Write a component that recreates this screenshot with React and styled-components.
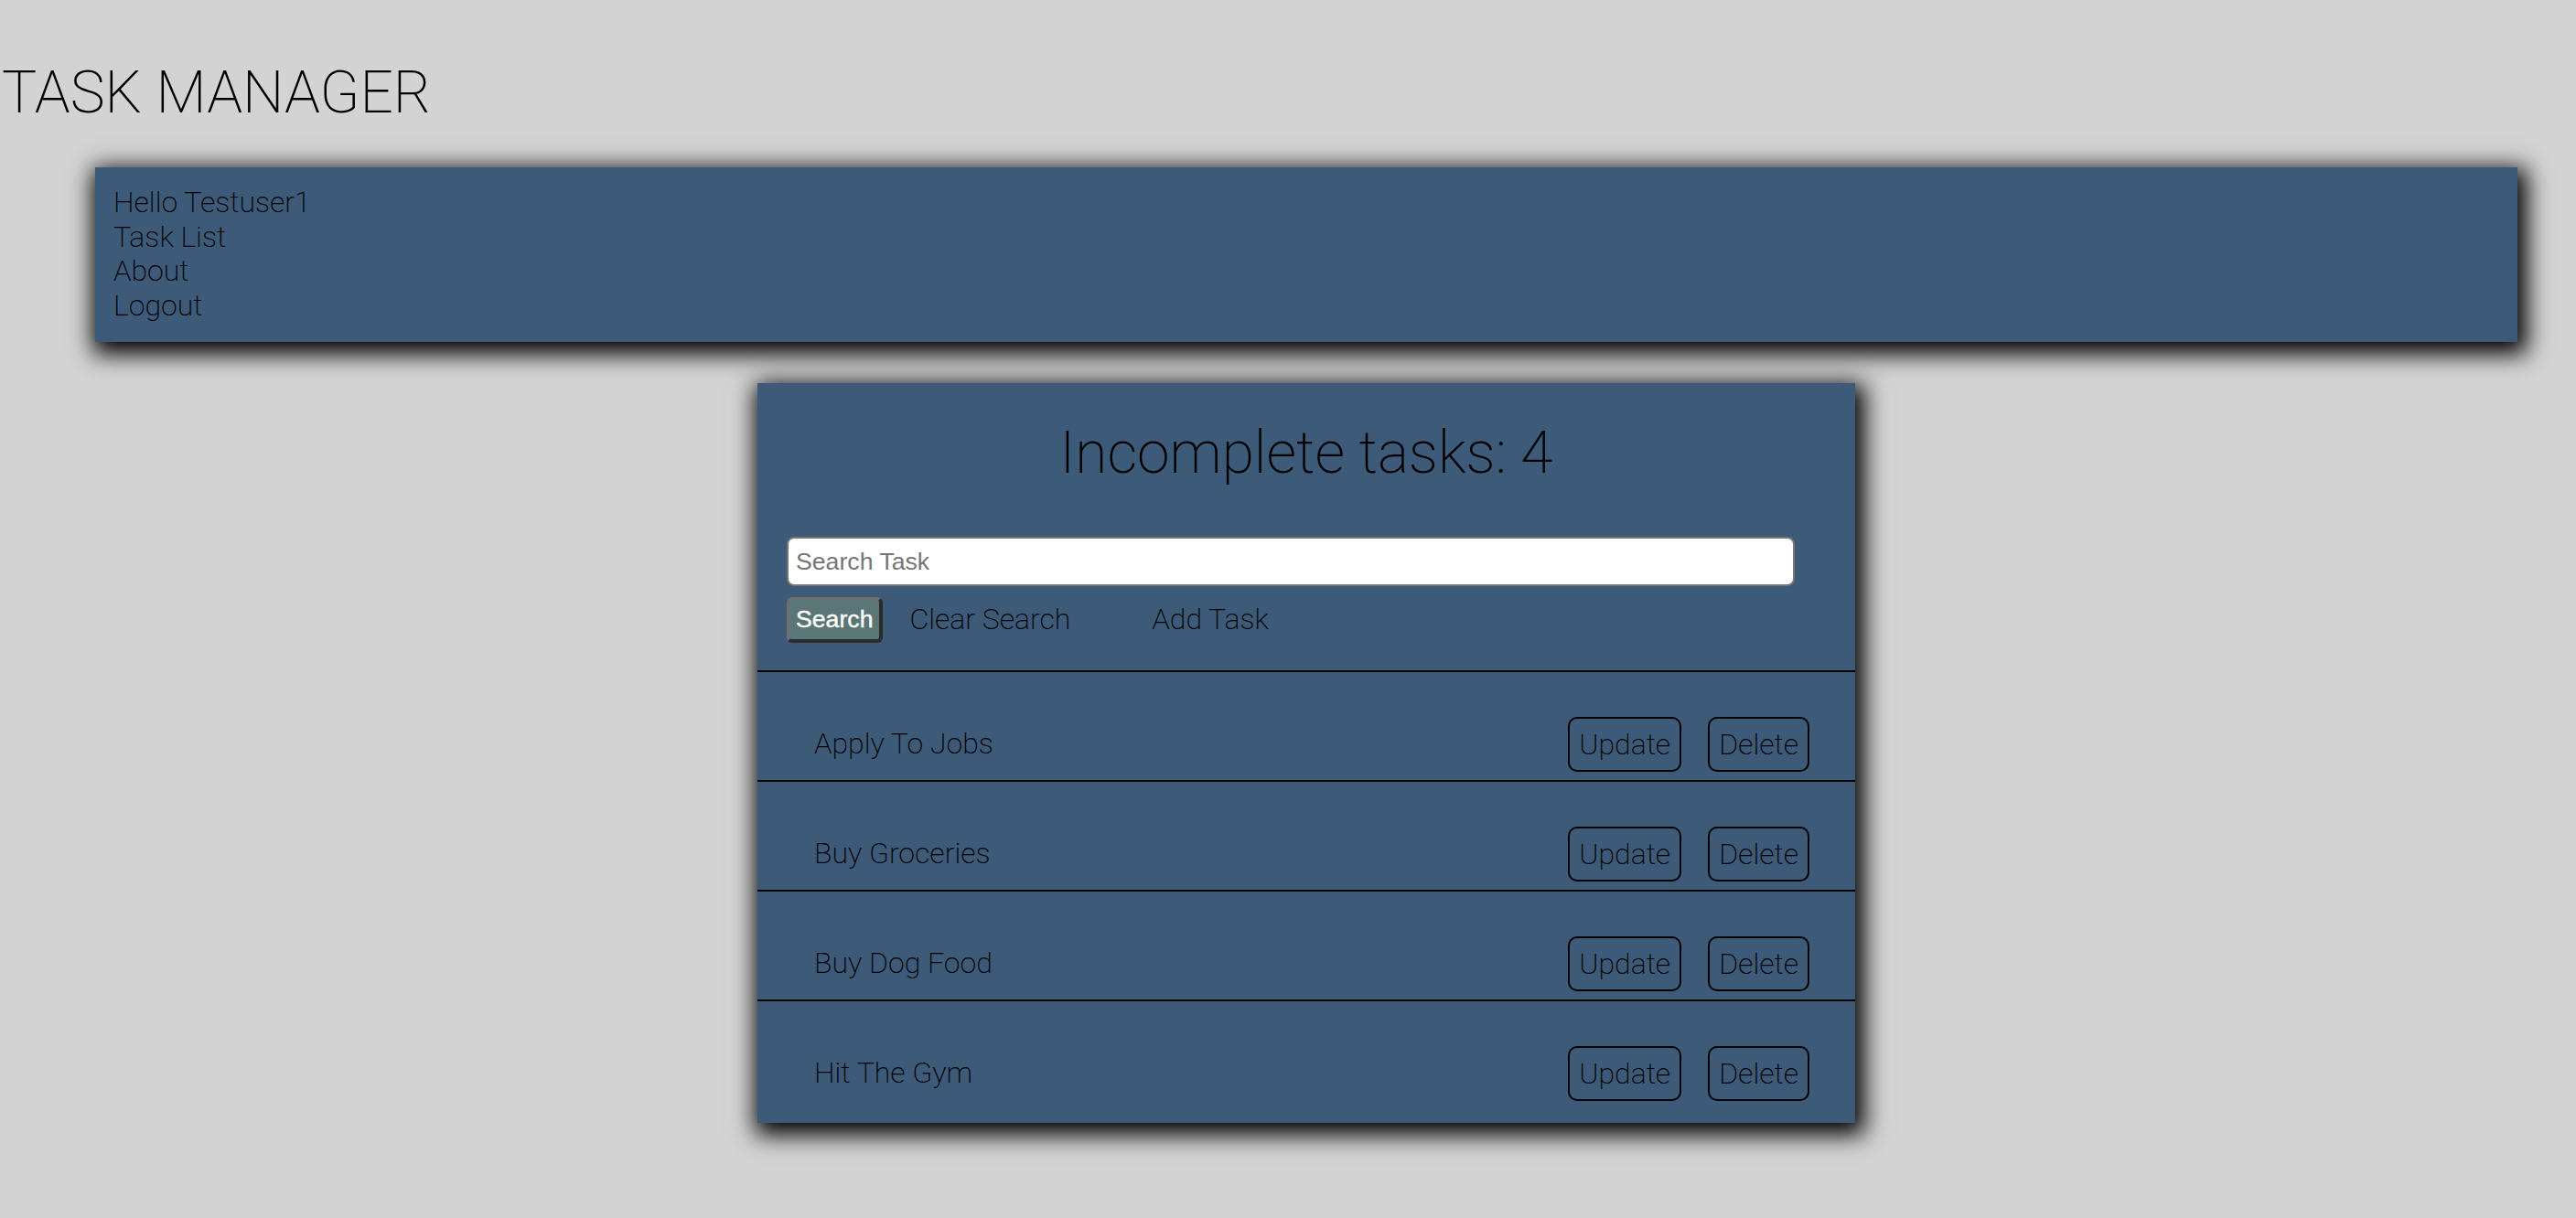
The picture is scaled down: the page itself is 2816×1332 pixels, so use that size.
import React, { useState } from 'react';
import styled, { createGlobalStyle } from 'styled-components';

const GlobalStyle = createGlobalStyle`
  html, body {
    margin: 0;
    padding: 0;
    background: #d3d3d3;
    font-family: Roboto, "Liberation Sans", sans-serif;
    font-weight: 200;
    color: #000;
  }
`;

const Page = styled.div`
  min-height: 1332px;
`;

const Title = styled.h1`
  margin: 0;
  padding: 64px 0 44px 2px;
  font-size: 64px;
  font-weight: 200;
  line-height: 75px;
`;

const Main = styled.div`
  padding-left: 40px;
  display: flex;
  flex-direction: column;
`;

const Nav = styled.nav`
  margin: 0 64px;
  padding: 20px 20px 21px;
  background: #3d5a78;
  box-shadow: 4px 7px 24px 6px #000;
  display: flex;
  flex-direction: column;
`;

const NavLink = styled.a`
  font-size: 32px;
  line-height: 37.5px;
  color: #000;
  text-decoration: none;
  cursor: pointer;
`;

const Card = styled.section`
  width: 1200px;
  margin: 45px auto 0;
  background: #3d5a78;
  box-shadow: 4px 7px 24px 6px #000;
  padding-bottom: 15px;
`;

const CardHeader = styled.div`
  padding: 39px 32px 30px;
  border-bottom: 2px solid #000;
`;

const Heading = styled.h2`
  margin: 0 0 54px;
  font-size: 64px;
  line-height: 75px;
  font-weight: 200;
  text-align: center;
`;

const SearchInput = styled.input`
  display: block;
  box-sizing: border-box;
  width: 1102px;
  height: 54px;
  padding: 0 8px;
  border: 2px solid #767676;
  border-radius: 8px;
  background: #fff;
  font-family: "Liberation Sans", Arial, sans-serif;
  font-size: 26.67px;
  color: #000;
  outline: none;
  &::placeholder {
    color: #757575;
  }
`;

const Controls = styled.div`
  display: flex;
  align-items: center;
  margin-top: 12px;
`;

const SearchButton = styled.button`
  box-sizing: border-box;
  height: 50px;
  padding: 0 7px;
  background: #5b7677;
  color: #fff;
  font-family: "Liberation Sans", Arial, sans-serif;
  font-weight: 400;
  font-size: 26.67px;
  -webkit-text-stroke: 0.4px #fff;
  border-style: solid;
  border-width: 3px 4px 4px 3px;
  border-color: #6f6f6f #2b2b2b #2b2b2b #6f6f6f;
  border-radius: 6px;
  cursor: pointer;
`;

const TextButton = styled.button`
  margin-left: ${p => p.$gap}px;
  padding: 0;
  background: none;
  border: none;
  font-family: Roboto, sans-serif;
  font-weight: 200;
  font-size: 32px;
  line-height: 37.5px;
  color: #000;
  cursor: pointer;
`;

const TaskList = styled.ul`
  list-style: none;
  margin: 0;
  padding: 0;
`;

const TaskRow = styled.li`
  display: flex;
  align-items: center;
  padding: 49px 50px 9px 62px;
  border-top: ${p => (p.$first ? 'none' : '2px solid #000')};
`;

const TaskName = styled.span`
  flex: 1;
  font-size: 32px;
  line-height: 37.5px;
`;

const OutlineButton = styled.button`
  box-sizing: border-box;
  height: 60px;
  margin-left: ${p => p.$gap || 0}px;
  padding: 0 10px;
  background: transparent;
  border: 2px solid #000;
  border-radius: 10px;
  font-family: Roboto, sans-serif;
  font-weight: 200;
  font-size: 32px;
  line-height: 38px;
  color: #000;
  cursor: pointer;
`;

const initialTasks = ['Apply To Jobs', 'Buy Groceries', 'Buy Dog Food', 'Hit The Gym'];

export default function App() {
  const [tasks] = useState(initialTasks);
  const [query, setQuery] = useState('');

  return (
    <Page>
      <GlobalStyle />
      <Title>TASK MANAGER</Title>
      <Main>
        <Nav>
          <NavLink>Hello Testuser1</NavLink>
          <NavLink>Task List</NavLink>
          <NavLink>About</NavLink>
          <NavLink>Logout</NavLink>
        </Nav>

        <Card>
          <CardHeader>
            <Heading>Incomplete tasks: {tasks.length}</Heading>
            <SearchInput
              placeholder="Search Task"
              value={query}
              onChange={e => setQuery(e.target.value)}
            />
            <Controls>
              <SearchButton>Search</SearchButton>
              <TextButton $gap={29} onClick={() => setQuery('')}>Clear Search</TextButton>
              <TextButton $gap={89}>Add Task</TextButton>
            </Controls>
          </CardHeader>

          <TaskList>
            {tasks.map((task, i) => (
              <TaskRow key={task} $first={i === 0}>
                <TaskName>{task}</TaskName>
                <OutlineButton>Update</OutlineButton>
                <OutlineButton $gap={29}>Delete</OutlineButton>
              </TaskRow>
            ))}
          </TaskList>
        </Card>
      </Main>
    </Page>
  );
}
